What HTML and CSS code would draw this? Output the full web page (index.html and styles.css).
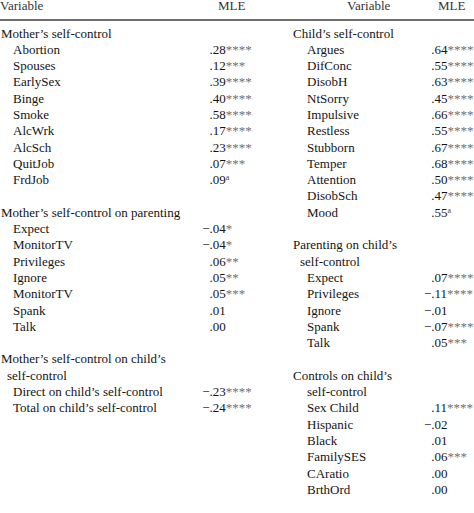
FILE: index.html
```html
<!DOCTYPE html>
<html lang="en">
<head>
<meta charset="utf-8">
<title>MLE table</title>
<link rel="stylesheet" href="styles.css">
</head>
<body>
<div class="tbl">
  <div class="head">
    <span class="h1">Variable</span>
    <span class="h2">MLE</span>
    <span class="h3">Variable</span>
    <span class="h4">MLE</span>
  </div>
  <div class="cols">
    <div class="col left">
      <div class="grp">
        <div class="gh">Mother’s self-control</div>
        <div class="row"><span class="lab">Abortion</span><span class="v">.28<i>****</i></span></div>
        <div class="row"><span class="lab">Spouses</span><span class="v">.12<i>***</i></span></div>
        <div class="row"><span class="lab">EarlySex</span><span class="v">.39<i>****</i></span></div>
        <div class="row"><span class="lab">Binge</span><span class="v">.40<i>****</i></span></div>
        <div class="row"><span class="lab">Smoke</span><span class="v">.58<i>****</i></span></div>
        <div class="row"><span class="lab">AlcWrk</span><span class="v">.17<i>****</i></span></div>
        <div class="row"><span class="lab">AlcSch</span><span class="v">.23<i>****</i></span></div>
        <div class="row"><span class="lab">QuitJob</span><span class="v">.07<i>***</i></span></div>
        <div class="row"><span class="lab">FrdJob</span><span class="v">.09<sup>a</sup></span></div>
      </div>
      <div class="grp">
        <div class="gh">Mother’s self-control on parenting</div>
        <div class="row"><span class="lab">Expect</span><span class="v neg">−.04<i>*</i></span></div>
        <div class="row"><span class="lab">MonitorTV</span><span class="v neg">−.04<i>*</i></span></div>
        <div class="row"><span class="lab">Privileges</span><span class="v">.06<i>**</i></span></div>
        <div class="row"><span class="lab">Ignore</span><span class="v">.05<i>**</i></span></div>
        <div class="row"><span class="lab">MonitorTV</span><span class="v">.05<i>***</i></span></div>
        <div class="row"><span class="lab">Spank</span><span class="v">.01</span></div>
        <div class="row"><span class="lab">Talk</span><span class="v">.00</span></div>
      </div>
      <div class="grp">
        <div class="gh">Mother’s self-control on child’s</div>
        <div class="gh cont">self-control</div>
        <div class="row"><span class="lab">Direct on child’s self-control</span><span class="v neg">−.23<i>****</i></span></div>
        <div class="row"><span class="lab">Total on child’s self-control</span><span class="v neg">−.24<i>****</i></span></div>
      </div>
    </div>
    <div class="col right">
      <div class="grp">
        <div class="gh">Child’s self-control</div>
        <div class="row"><span class="lab">Argues</span><span class="v">.64<i>****</i></span></div>
        <div class="row"><span class="lab">DifConc</span><span class="v">.55<i>****</i></span></div>
        <div class="row"><span class="lab">DisobH</span><span class="v">.63<i>****</i></span></div>
        <div class="row"><span class="lab">NtSorry</span><span class="v">.45<i>****</i></span></div>
        <div class="row"><span class="lab">Impulsive</span><span class="v">.66<i>****</i></span></div>
        <div class="row"><span class="lab">Restless</span><span class="v">.55<i>****</i></span></div>
        <div class="row"><span class="lab">Stubborn</span><span class="v">.67<i>****</i></span></div>
        <div class="row"><span class="lab">Temper</span><span class="v">.68<i>****</i></span></div>
        <div class="row"><span class="lab">Attention</span><span class="v">.50<i>****</i></span></div>
        <div class="row"><span class="lab">DisobSch</span><span class="v">.47<i>****</i></span></div>
        <div class="row"><span class="lab">Mood</span><span class="v">.55<sup>a</sup></span></div>
      </div>
      <div class="grp">
        <div class="gh">Parenting on child’s</div>
        <div class="gh cont">self-control</div>
        <div class="row"><span class="lab">Expect</span><span class="v">.07<i>****</i></span></div>
        <div class="row"><span class="lab">Privileges</span><span class="v neg">−.11<i>****</i></span></div>
        <div class="row"><span class="lab">Ignore</span><span class="v neg">−.01</span></div>
        <div class="row"><span class="lab">Spank</span><span class="v neg">−.07<i>****</i></span></div>
        <div class="row"><span class="lab">Talk</span><span class="v">.05<i>***</i></span></div>
      </div>
      <div class="grp">
        <div class="gh">Controls on child’s</div>
        <div class="gh cont2">self-control</div>
        <div class="row"><span class="lab">Sex Child</span><span class="v">.11<i>****</i></span></div>
        <div class="row"><span class="lab">Hispanic</span><span class="v neg">−.02</span></div>
        <div class="row"><span class="lab">Black</span><span class="v">.01</span></div>
        <div class="row"><span class="lab">FamilySES</span><span class="v">.06<i>***</i></span></div>
        <div class="row"><span class="lab">CAratio</span><span class="v">.00</span></div>
        <div class="row"><span class="lab">BrthOrd</span><span class="v">.00</span></div>
      </div>
    </div>
  </div>
</div>
</body>
</html>
```
FILE: styles.css
```css
html, body {
  margin: 0;
  padding: 0;
  background: #ffffff;
}
body {
  width: 474px;
  height: 513px;
  overflow: hidden;
  font-family: "Liberation Serif", "Times New Roman", serif;
  font-size: 13px;
  line-height: 16.3px;
  color: #141414;
  white-space: nowrap;
}
.tbl {
  width: 474px;
}
.head {
  display: flex;
  height: 18.5px;
  line-height: 12px;
  border-bottom: 2px solid #6e6e6e;
  color: #333333;
}
.head span {
  display: block;
}
.h1 { width: 218px; }
.h2 { width: 129px; }
.h3 { width: 91px; }
.cols {
  display: flex;
  padding-top: 5px;
}
.col {
  display: flex;
  flex-direction: column;
  gap: 16.3px;
}
.left {
  width: 293px;
}
.right {
  flex: 1;
  min-width: 0;
}
.grp {
  display: flex;
  flex-direction: column;
}
.row {
  display: flex;
}
.left .gh { padding-left: 1px; }
.left .gh.cont { padding-left: 7px; }
.left .lab {
  width: 189.2px;
  padding-left: 13px;
}
.right .gh.cont { padding-left: 7px; }
.right .gh.cont2 { padding-left: 14px; }
.right .lab {
  width: 117px;
  padding-left: 14px;
}
.v {
  padding-left: 7.3px;
}
.v.neg {
  padding-left: 0;
}
.v i {
  font-style: normal;
  color: #707070;
}
.v sup {
  font-size: 8px;
  line-height: 0;
  vertical-align: 4px;
  color: #444;
}
```
